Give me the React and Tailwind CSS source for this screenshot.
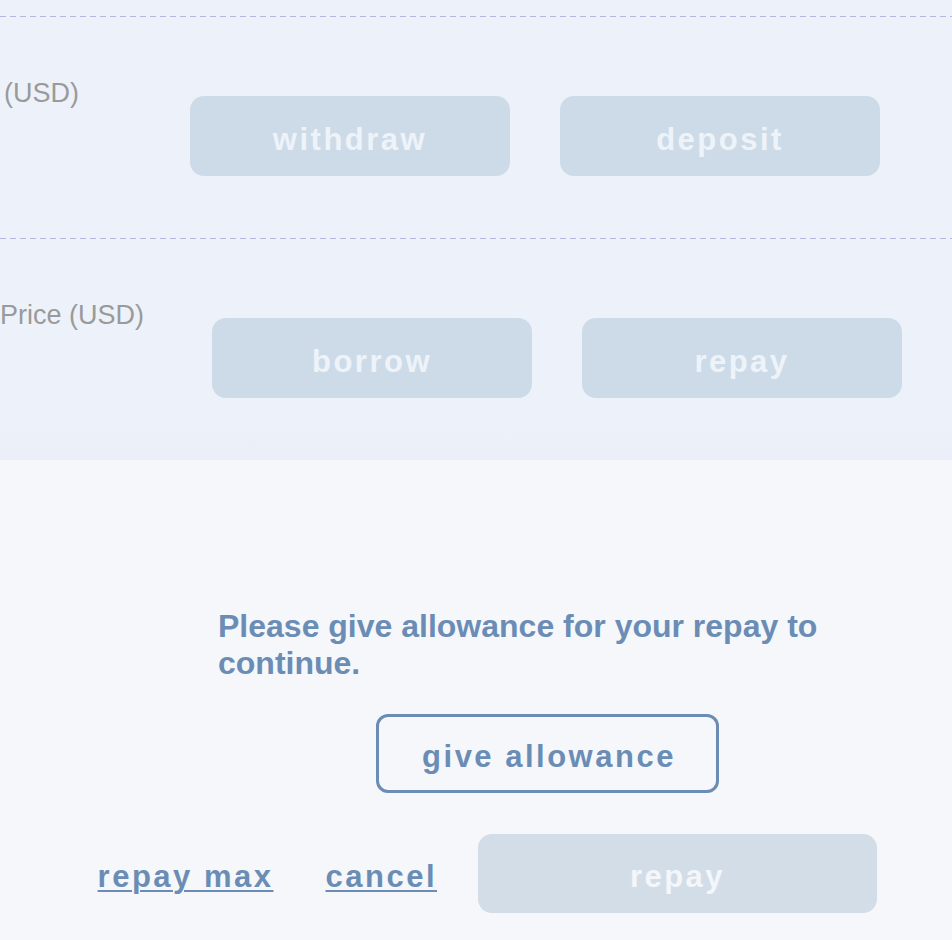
import React from "react";

const font = { fontFamily: '"Liberation Sans", Arial, sans-serif' };

const Divider = () => (
  <div className="h-px w-full bg-[repeating-linear-gradient(to_right,#b4b7de_0px,#b4b7de_6px,transparent_6px,transparent_10px)]" />
);

const GhostButton = ({ children }) => (
  <button
    disabled
    className="w-[320px] h-[80px] shrink-0 rounded-[14px] bg-[#cddbe8] text-[#eef3f9] text-[31px] font-bold tracking-[2.5px] leading-none pt-[6px]"
  >
    {children}
  </button>
);

const ActionRow = ({ label, labelOffset, buttonsAt, actions }) => (
  <div className="flex flex-col">
    <Divider />
    <div className="flex items-start h-[221px]">
      <div className="shrink-0 mt-[61px] whitespace-nowrap" style={{ width: buttonsAt }}>
        <span
          className="block text-[27px] leading-[30px] text-[#9a9a9a]"
          style={{ marginLeft: labelOffset }}
        >
          {label}
        </span>
      </div>
      <div className="flex gap-[50px] mt-[79px]">
        {actions.map((a) => (
          <GhostButton key={a}>{a}</GhostButton>
        ))}
      </div>
    </div>
  </div>
);

const linkCls =
  "text-[31px] font-bold tracking-[2.5px] text-[#6b8db5] underline underline-offset-[3px] decoration-2 cursor-pointer pt-[8px]";

export default function App() {
  return (
    <div className="w-[952px] h-[940px] overflow-hidden bg-[#f5f7fb]" style={font}>
      <section className="pt-4 bg-[linear-gradient(to_bottom,#edf2fa_0%,#edf2fa_90%,#e9eef8_100%)]">
        <ActionRow
          label="Price (USD)"
          labelOffset={-65}
          buttonsAt={190}
          actions={["withdraw", "deposit"]}
        />
        <ActionRow
          label="Price (USD)"
          labelOffset={0}
          buttonsAt={212}
          actions={["borrow", "repay"]}
        />
      </section>

      <section className="flex flex-col items-end pr-[75px] pt-[148px]">
        <div className="w-[659px] flex flex-col">
          <p className="text-[32px] leading-[37px] font-bold text-[#6b8db5]">
            Please give allowance for your repay to continue.
          </p>
          <div className="flex justify-center mt-[32px]">
            <button className="w-[343px] h-[79px] rounded-[12px] border-[3px] border-[#6b8db5] text-[#6b8db5] text-[31px] font-bold tracking-[2.5px] leading-none pl-[3px] pt-[6px]">
              give allowance
            </button>
          </div>
        </div>

        <div className="flex items-center mt-[41px]">
          <a className={linkCls}>repay max</a>
          <a className={linkCls + " ml-[52px]"}>cancel</a>
          <button
            disabled
            className="ml-[41px] w-[399px] h-[79px] rounded-[14px] bg-[#d3dde8] text-[#f3f6fa] text-[31px] font-bold tracking-[2.5px] leading-none pt-[6px]"
          >
            repay
          </button>
        </div>
      </section>
    </div>
  );
}
